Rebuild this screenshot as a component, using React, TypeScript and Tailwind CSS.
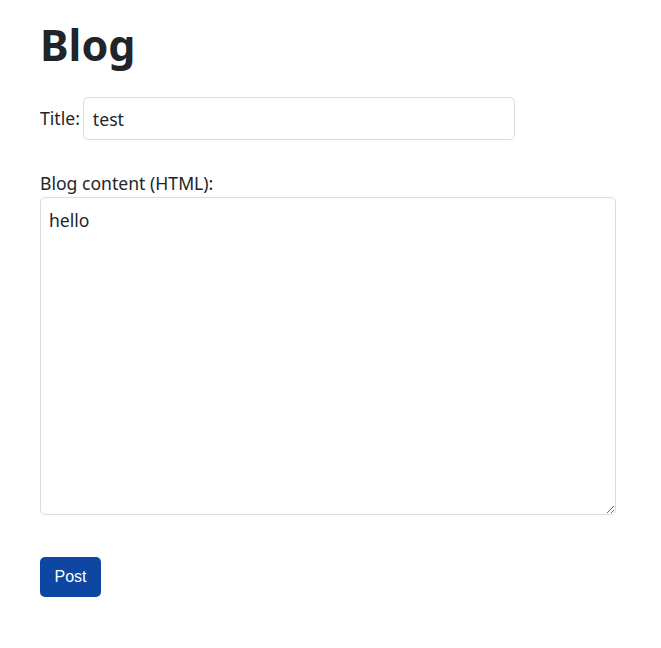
export default function App() {
  return (
    <div className="min-h-[648px] bg-white px-10 pt-[19px] text-[#212529] text-[17.6px] leading-[27px]" style={{ fontFamily: '"Noto Sans", sans-serif' }}>
      <h1 className="text-[43px] font-bold leading-[1.2] mb-[26px]">Blog</h1>
      <div className="flex items-center gap-[3px]">
        <label className="pt-[1px]">Title:</label>
        <input
          defaultValue="test"
          className="w-[432px] h-[43px] border border-[#dadce0] rounded-[5px] px-[9px] pt-[1px] text-[17.6px] text-[#212529] outline-none"
        />
      </div>
      <div className="mt-[30px]">
        <label className="block leading-[27px]">Blog content (HTML):</label>
        <textarea
          defaultValue="hello"
          className="block w-[576px] h-[318px] border border-[#dadce0] rounded-[5px] px-[8px] pt-[9px] pb-[8px] text-[17.6px] text-[#212529] outline-none"
        />
      </div>
      <button
        className="mt-[42px] w-[61px] h-[40px] rounded-[5px] bg-[#0d47a1] text-white text-[16px]"
        style={{ fontFamily: '"Liberation Sans", Arial, sans-serif' }}
      >
        Post
      </button>
    </div>
  );
}
